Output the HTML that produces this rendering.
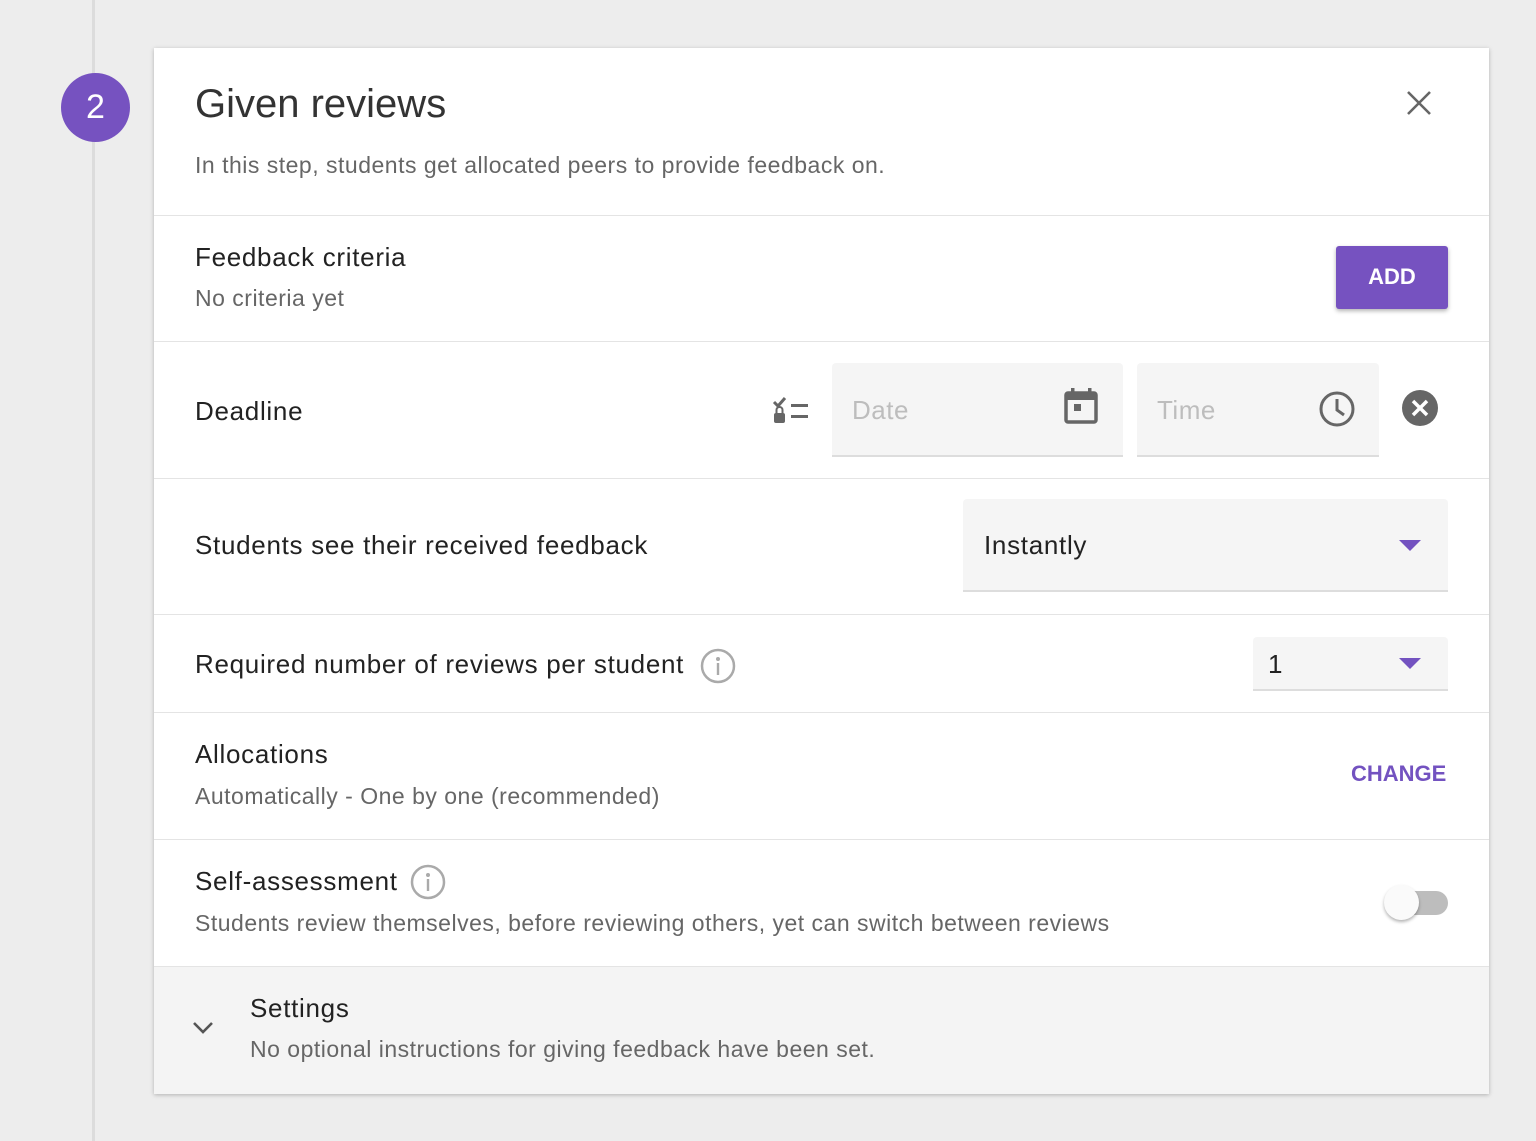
<!DOCTYPE html>
<html><head><style>
*{margin:0;padding:0;box-sizing:border-box}
body{width:1536px;height:1141px;background:#ededed;font-family:"Liberation Sans",Arial,sans-serif;position:relative;overflow:hidden;color:#212121}
.a{position:absolute}
.vl{left:92px;top:0;width:3px;height:1141px;background:#dcdcdc}
.circ{left:61px;top:73px;width:69px;height:69px;border-radius:50%;background:#7652c0;color:#fff;font-size:34px;text-align:center;line-height:69px}
.card{left:154px;top:48px;width:1335px;height:1046px;background:#fff;box-shadow:0 1px 4px rgba(0,0,0,.25)}
.hr{position:absolute;left:0;width:1335px;height:1px;background:#e4e4e4}
.t{position:absolute;font-size:26px;color:#222;white-space:nowrap;letter-spacing:0.7px}
.s{position:absolute;font-size:23px;color:#666;white-space:nowrap;letter-spacing:0.5px}
.field{position:absolute;background:#f5f5f5;border-bottom:2px solid #ddd;border-radius:4px 4px 0 0}
.ph{position:absolute;font-size:26px;color:#bdbdbd;letter-spacing:0.5px}
.purple{color:#7352c0}
</style></head><body>
<div class="a vl"></div>
<div class="a circ">2</div>
<div class="a card">
  <div class="t" style="left:41px;top:34px;font-size:40px;color:#333;letter-spacing:0">Given reviews</div>
  <svg class="a" style="left:1252px;top:42px" width="26" height="26" viewBox="0 0 26 26"><path d="M2 2L24 24M24 2L2 24" stroke="#666" stroke-width="2.6"/></svg>
  <div class="s" style="left:41px;top:104px">In this step, students get allocated peers to provide feedback on.</div>
  <div class="hr" style="top:167px"></div>
  <div class="t" style="left:41px;top:194px">Feedback criteria</div>
  <div class="s" style="left:41px;top:237px">No criteria yet</div>
  <div class="a" style="left:1182px;top:198px;width:112px;height:63px;background:#7652c0;border-radius:3px;box-shadow:0 2px 4px rgba(0,0,0,.3);color:#fff;font-size:22px;font-weight:bold;text-align:center;line-height:61px">ADD</div>
  <div class="hr" style="top:293px"></div>
  <div class="t" style="left:41px;top:348px">Deadline</div>
  <svg class="a" style="left:618px;top:347px" width="38" height="30" viewBox="0 0 38 30"><path d="M2 7l4 4 7-8" stroke="#666" stroke-width="3" fill="none"/><rect x="2" y="18" width="11" height="10" rx="2" fill="#666"/><path d="M4.5 18v-3a3 3 0 0 1 6 0v3" stroke="#666" stroke-width="2" fill="none"/><rect x="19" y="9" width="17" height="3" fill="#666"/><rect x="19" y="20" width="17" height="3" fill="#666"/></svg>
  <div class="field" style="left:678px;top:315px;width:291px;height:94px"></div>
  <div class="ph" style="left:698px;top:347px">Date</div>
  <svg class="a" style="left:910px;top:340px" width="34" height="36" viewBox="0 0 34 36"><rect x="2" y="5" width="30" height="29" rx="2" fill="none" stroke="#666" stroke-width="3.5"/><rect x="2" y="5" width="30" height="7" fill="#666"/><rect x="7" y="0" width="3.5" height="7" fill="#666"/><rect x="24" y="0" width="3.5" height="7" fill="#666"/><rect x="10" y="16" width="7" height="7" fill="#666"/></svg>
  <div class="field" style="left:983px;top:315px;width:242px;height:94px"></div>
  <div class="ph" style="left:1003px;top:347px">Time</div>
  <svg class="a" style="left:1164px;top:342px" width="38" height="38" viewBox="0 0 38 38"><circle cx="19" cy="19" r="16" fill="none" stroke="#666" stroke-width="3"/><path d="M19 9v11l7 5" stroke="#666" stroke-width="3" fill="none"/></svg>
  <svg class="a" style="left:1248px;top:342px" width="36" height="36" viewBox="0 0 36 36"><circle cx="18" cy="18" r="18" fill="#666"/><path d="M11 11l14 14M25 11L11 25" stroke="#fff" stroke-width="3.5"/></svg>
  <div class="hr" style="top:430px"></div>
  <div class="t" style="left:41px;top:482px">Students see their received feedback</div>
  <div class="field" style="left:809px;top:451px;width:485px;height:93px"></div>
  <div class="t" style="left:830px;top:482px">Instantly</div>
  <svg class="a" style="left:1245px;top:492px" width="22" height="12"><path d="M0 0h22L11 11z" fill="#7352c0"/></svg>
  <div class="hr" style="top:566px"></div>
  <div class="t" style="left:41px;top:601px">Required number of reviews per student</div>
  <svg class="a" style="left:546px;top:600px" width="36" height="36" viewBox="0 0 36 36"><circle cx="18" cy="18" r="16" fill="none" stroke="#aaa" stroke-width="2.5"/><circle cx="18" cy="11" r="2" fill="#aaa"/><rect x="16.8" y="15" width="2.4" height="12" fill="#aaa"/></svg>
  <div class="field" style="left:1099px;top:589px;width:195px;height:54px"></div>
  <div class="t" style="left:1114px;top:601px">1</div>
  <svg class="a" style="left:1245px;top:610px" width="22" height="12"><path d="M0 0h22L11 11z" fill="#7352c0"/></svg>
  <div class="hr" style="top:664px"></div>
  <div class="t" style="left:41px;top:691px">Allocations</div>
  <div class="s" style="left:41px;top:735px">Automatically - One by one (recommended)</div>
  <div class="a purple" style="left:1197px;top:713px;font-size:22px;font-weight:bold">CHANGE</div>
  <div class="hr" style="top:791px"></div>
  <div class="t" style="left:41px;top:818px">Self-assessment</div>
  <svg class="a" style="left:256px;top:816px" width="36" height="36" viewBox="0 0 36 36"><circle cx="18" cy="18" r="16" fill="none" stroke="#aaa" stroke-width="2.5"/><circle cx="18" cy="11" r="2" fill="#aaa"/><rect x="16.8" y="15" width="2.4" height="12" fill="#aaa"/></svg>
  <div class="s" style="left:41px;top:862px">Students review themselves, before reviewing others, yet can switch between reviews</div>
  <div class="a" style="left:1242px;top:843px;width:52px;height:24px;border-radius:12px;background:#bdbdbd"></div>
  <div class="a" style="left:1230px;top:837px;width:35px;height:35px;border-radius:50%;background:#fafafa;box-shadow:0 2px 3px rgba(0,0,0,.3)"></div>
  <div class="a" style="left:0;top:918px;width:1335px;height:128px;background:#f4f4f4;border-top:1px solid #e4e4e4"></div>
  <svg class="a" style="left:38px;top:973px" width="22" height="14"><path d="M2 2l9 9 9-9" stroke="#555" stroke-width="2.6" fill="none"/></svg>
  <div class="t" style="left:96px;top:945px">Settings</div>
  <div class="s" style="left:96px;top:988px">No optional instructions for giving feedback have been set.</div>
</div>
</body></html>
